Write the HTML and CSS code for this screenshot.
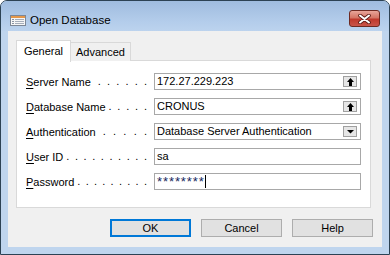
FILE: index.html
```html
<!DOCTYPE html>
<html>
<head>
<meta charset="utf-8">
<link rel="stylesheet" href="styles.css">
</head>
<body>
<div class="window">
  <div class="titlebar">
    <svg class="app-icon" width="16" height="11" viewBox="0 0 16 11">
      <rect x="0.5" y="0.5" width="15" height="10" fill="#f6f6f6" stroke="#7d8796"/>
      <rect x="1" y="1" width="14" height="2" fill="#e4974a"/>
      <rect x="2" y="4" width="2" height="1" fill="#8a94a3"/>
      <rect x="5" y="4" width="9" height="1" fill="#a6aebb"/>
      <rect x="2" y="6" width="2" height="1" fill="#8a94a3"/>
      <rect x="5" y="6" width="9" height="1" fill="#a6aebb"/>
      <rect x="2" y="8" width="2" height="1" fill="#8a94a3"/>
      <rect x="5" y="8" width="9" height="1" fill="#a6aebb"/>
    </svg>
    <span class="title">Open Database</span>
    <div class="close">
      <svg width="13" height="10" viewBox="0 0 13 10">
        <path d="M2 1.5 L11 8.5 M11 1.5 L2 8.5" stroke="#5a1a14" stroke-width="3.6" stroke-linecap="round"/>
        <path d="M2 1.5 L11 8.5 M11 1.5 L2 8.5" stroke="#ffffff" stroke-width="2" stroke-linecap="round"/>
      </svg>
    </div>
  </div>
  <div class="client">
    <div class="tabs">
      <div class="tab active">General</div>
      <div class="tab">Advanced</div>
    </div>
    <div class="panel">
      <div class="row">
        <div class="label"><span class="text"><u>S</u>erver Name</span><span class="dots wide">. . . . . .</span></div>
        <div class="field"><span class="value">172.27.229.223</span><span class="fbtn"><svg width="7" height="8" viewBox="0 0 7 8"><path d="M3.5 0 L7 4 H5 V8 H2 V4 H0 Z" fill="#000"/></svg></span></div>
      </div>
      <div class="row">
        <div class="label"><span class="text"><u>D</u>atabase Name</span><span class="dots">. . . . .</span></div>
        <div class="field"><span class="value">CRONUS</span><span class="fbtn"><svg width="7" height="8" viewBox="0 0 7 8"><path d="M3.5 0 L7 4 H5 V8 H2 V4 H0 Z" fill="#000"/></svg></span></div>
      </div>
      <div class="row">
        <div class="label"><span class="text"><u>A</u>uthentication</span><span class="dots wide">. . . . .</span></div>
        <div class="field"><span class="value">Database Server Authentication</span><span class="fbtn"><svg width="7" height="4" viewBox="0 0 7 4"><path d="M0 0 H7 L3.5 3.5 Z" fill="#000"/></svg></span></div>
      </div>
      <div class="row">
        <div class="label"><span class="text"><u>U</u>ser ID</span><span class="dots">. . . . . . . . . .</span></div>
        <div class="field"><span class="value">sa</span></div>
      </div>
      <div class="row">
        <div class="label"><span class="text"><u>P</u>assword</span><span class="dots">. . . . . . . . .</span></div>
        <div class="field"><span class="value pw">********</span><span class="caret"></span></div>
      </div>
    </div>
    <div class="buttons">
      <div class="btn default">OK</div>
      <div class="btn">Cancel</div>
      <div class="btn">Help</div>
    </div>
  </div>
</div>
</body>
</html>
```
FILE: styles.css
```css
html, body {
  margin: 0;
  padding: 0;
  background: #ffffff;
}
body {
  width: 390px;
  height: 255px;
  overflow: hidden;
  font-family: "Liberation Sans", Arial, sans-serif;
  font-size: 11px;
  color: #000;
}
.window {
  box-sizing: border-box;
  width: 390px;
  height: 255px;
  border: 1px solid #2c4254;
  border-radius: 7px 7px 0 0;
  background: #bfd5ee;
  display: flex;
  flex-direction: column;
}
.titlebar {
  height: 30px;
  box-sizing: border-box;
  padding: 6px 9px 0 9px;
  display: flex;
  align-items: flex-start;
  background: linear-gradient(#9fbcdf, #b4cdeb 70%, #bcd3ee);
  border-radius: 6px 6px 0 0;
}
.app-icon {
  margin-top: 8px;
  flex: none;
}
.title {
  margin-left: 4px;
  margin-top: 5px;
  font-size: 11.5px;
  line-height: 16px;
  color: #000;
}
.close {
  margin-left: auto;
  margin-top: 3px;
  width: 31px;
  height: 17px;
  box-sizing: border-box;
  border: 1px solid #6e2a22;
  border-radius: 3px;
  background: linear-gradient(#e8a599 0%, #d47565 45%, #c0392c 55%, #c9554a 100%);
  display: flex;
  align-items: center;
  justify-content: center;
}
.client {
  margin: 0 7px;
  height: 216px;
  box-sizing: border-box;
  background: #f0f0f0;
  padding: 8px 0 0 8px;
}
.tabs {
  display: flex;
  align-items: flex-end;
  height: 22px;
}
.tab {
  box-sizing: border-box;
  height: 19px;
  width: 60px;
  border: 1px solid #d9d9d9;
  border-left: none;
  border-bottom: none;
  background: #f0f0f0;
  text-align: center;
  line-height: 19px;
  position: relative;
  z-index: 1;
}
.tab.active {
  height: 22px;
  width: 55px;
  border-left: 1px solid #d9d9d9;
  background: #ffffff;
  line-height: 21px;
  z-index: 2;
  margin-bottom: -1px;
}
.panel {
  box-sizing: border-box;
  width: 355px;
  height: 148px;
  margin-top: -1px;
  border: 1px solid #d9d9d9;
  background: #ffffff;
  padding: 12px 9px 0 9px;
  display: flex;
  flex-direction: column;
  gap: 8px;
}
.row {
  display: flex;
  align-items: center;
  height: 17px;
}
.label {
  width: 128px;
  flex: none;
  display: flex;
  align-items: center;
  white-space: nowrap;
}
.label .text {
  flex: none;
}
.label u {
  text-decoration-thickness: 1px;
  text-underline-offset: 2px;
}
.dots {
  flex: 1;
  min-width: 0;
  white-space: normal;
  text-align: justify;
  text-align-last: justify;
  margin-left: 3px;
  padding-right: 7px;
  height: 15px;
  line-height: 15px;
}
.dots.wide {
  margin-left: 7px;
}
.field {
  box-sizing: border-box;
  width: 207px;
  height: 17px;
  border: 1px solid #a8a8a8;
  background: #ffffff;
  display: flex;
  align-items: center;
  padding: 0 3px 0 2px;
}
.value {
  flex: none;
  line-height: 15px;
}
.value.pw {
  font-size: 13px;
  letter-spacing: 0.9px;
  color: #14285e;
  height: 15px;
}
.fbtn {
  margin-left: auto;
  width: 14px;
  height: 11px;
  box-sizing: border-box;
  border: 1px solid #a0a0a0;
  background: #e6e6e6;
  display: flex;
  align-items: center;
  justify-content: center;
}
.caret {
  display: inline-block;
  width: 1px;
  height: 13px;
  background: #000;
  margin-left: 0;
}
.buttons {
  display: flex;
  justify-content: flex-end;
  gap: 10px;
  margin-top: 11px;
  padding-right: 9px;
}
.btn {
  box-sizing: border-box;
  width: 81px;
  height: 18px;
  border: 1px solid #adadad;
  background: #e1e1e1;
  text-align: center;
  line-height: 16px;
}
.btn.default {
  border: 2px solid #0078d7;
  line-height: 14px;
}
```
